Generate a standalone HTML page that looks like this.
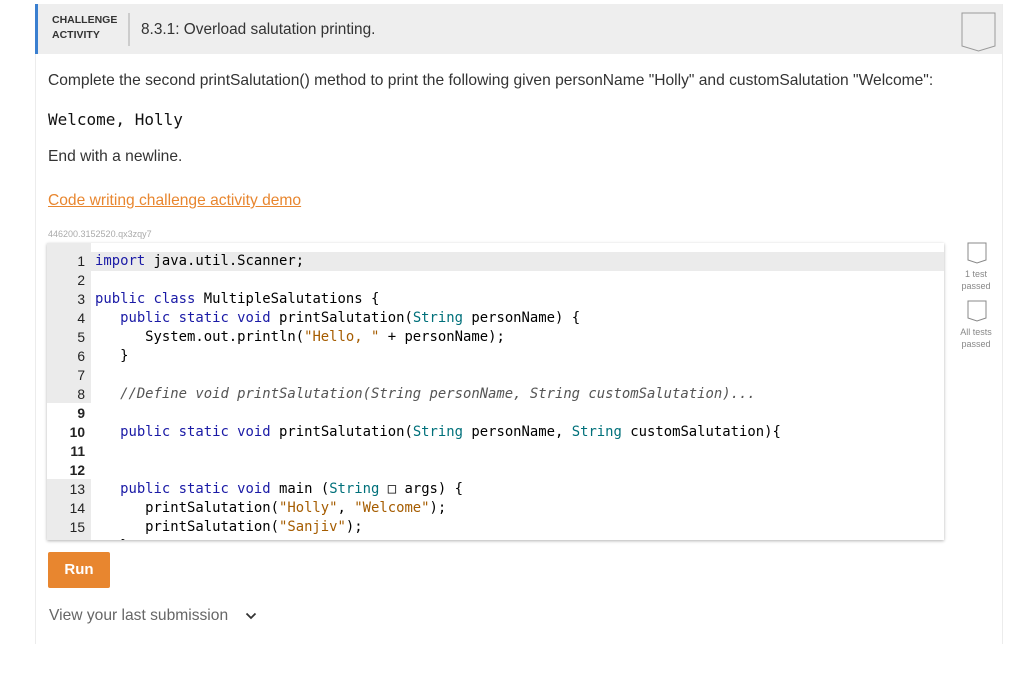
<!DOCTYPE html>
<html><head><meta charset="utf-8"><style>
body{margin:0;width:1024px;height:692px;background:#fff;font-family:"Liberation Sans",sans-serif;position:relative;overflow:hidden}
.card{position:absolute;left:35px;top:4px;width:966px;height:640px;border-right:1px solid #ececec;border-left:1px solid #ececec}
.hdr{position:absolute;left:35px;top:4px;width:967px;height:50px;background:#eeeeee;border-left:3px solid #3a7fd0;box-sizing:border-box}
.ca{position:absolute;left:14px;top:9px;font-size:10.5px;font-weight:bold;color:#333;line-height:15px}
.sep{position:absolute;left:90px;top:9px;width:2px;height:33px;background:#ccc}
.title{position:absolute;left:103px;top:17px;font-size:15.4px;color:#333}
.t{position:absolute;color:#333;font-size:15.6px}
.mono{font-family:"DejaVu Sans Mono","Liberation Mono",monospace}
.ed{position:absolute;left:47px;top:243px;width:897px;height:297px;box-shadow:0 1px 3px rgba(0,0,0,.3);overflow:hidden;background:#fff}
.ln{position:absolute;left:0;width:44px;height:19px;text-align:right;font-size:13.8px;line-height:19px;color:#222;box-sizing:border-box;padding-right:6px}
.g{background:#ebebeb}
.cl{position:absolute;left:48px;font-size:13.9px;line-height:19px;white-space:pre;color:#000}
.k{color:#1a1aa6}.s{color:#a55c00}.c{color:#555;font-style:italic}.ty{color:#00707a}
.small{position:absolute;font-size:9px;color:#888;text-align:center;width:50px;line-height:12px}
</style></head><body>
<div class="card"></div>
<div class="hdr"><div class="ca">CHALLENGE<br>ACTIVITY</div><div class="sep"></div><div class="title">8.3.1: Overload salutation printing.</div>
<svg style="position:absolute;left:923px;top:8px" width="36" height="40"><path d="M1 1H34V34L17.5 39L1 34Z" fill="none" stroke="#999" stroke-width="1"/></svg></div>
<div class="t" style="left:48px;top:72px">Complete the second printSalutation() method to print the following given personName "Holly" and customSalutation "Welcome":</div>
<div class="t mono" style="left:48px;top:110px;font-size:16px;color:#111">Welcome, Holly</div>
<div class="t" style="left:48px;top:148px">End with a newline.</div>
<div class="t" style="left:48px;top:192px;color:#e8862f;text-decoration:underline">Code writing challenge activity demo</div>
<div style="position:absolute;left:48px;top:229px;font-size:9px;color:#aaa">446200.3152520.qx3zqy7</div>
<div class="ed">
<div style="position:absolute;left:0;top:9px;width:897px;height:19px;background:#ebebeb"></div>
<div class="g" style="position:absolute;left:0;top:0;width:44px;height:160px"></div>
<div class="g" style="position:absolute;left:0;top:236px;width:44px;height:70px"></div>
<div class="ln" style="top:9px">1</div><div class="ln" style="top:28px">2</div><div class="ln" style="top:47px">3</div><div class="ln" style="top:66px">4</div><div class="ln" style="top:85px">5</div><div class="ln" style="top:104px">6</div><div class="ln" style="top:123px">7</div><div class="ln" style="top:142px">8</div>
<div class="ln" style="top:161px;font-weight:bold">9</div><div class="ln" style="top:180px;font-weight:bold">10</div><div class="ln" style="top:199px;font-weight:bold">11</div><div class="ln" style="top:218px;font-weight:bold">12</div>
<div class="ln" style="top:237px">13</div><div class="ln" style="top:256px">14</div><div class="ln" style="top:275px">15</div><div class="ln" style="top:294px">16</div>
<div class="cl mono" style="top:9px"><span class="k">import</span> java.util.Scanner;</div>
<div class="cl mono" style="top:47px"><span class="k">public class</span> MultipleSalutations {</div>
<div class="cl mono" style="top:66px">   <span class="k">public static void</span> printSalutation(<span class="ty">String</span> personName) {</div>
<div class="cl mono" style="top:85px">      System.out.println(<span class="s">"Hello, "</span> + personName);</div>
<div class="cl mono" style="top:104px">   }</div>
<div class="cl mono c" style="top:142px">   //Define void printSalutation(String personName, String customSalutation)...</div>
<div class="cl mono" style="top:180px">   <span class="k">public static void</span> printSalutation(<span class="ty">String</span> personName, <span class="ty">String</span> customSalutation){</div>
<div class="cl mono" style="top:237px">   <span class="k">public static void</span> main (<span class="ty">String</span> &#9633; args) {</div>
<div class="cl mono" style="top:256px">      printSalutation(<span class="s">"Holly"</span>, <span class="s">"Welcome"</span>);</div>
<div class="cl mono" style="top:275px">      printSalutation(<span class="s">"Sanjiv"</span>);</div>
<div class="cl mono" style="top:294px">   }</div>
</div>
<div style="position:absolute;left:48px;top:552px;width:62px;height:36px;background:#e8862f;border-radius:2px;color:#fff;font-weight:bold;font-size:15px;text-align:center;line-height:36px">Run</div>
<div class="t" style="left:49px;top:607px;color:#666">View your last submission</div>
<svg style="position:absolute;left:245px;top:611px" width="12" height="10"><path d="M1.5 2.5L6 7L10.5 2.5" fill="none" stroke="#333" stroke-width="1.8"/></svg>
<svg style="position:absolute;left:967px;top:242px" width="20" height="22"><path d="M1 1H19V18L10 21L1 18Z" fill="none" stroke="#888"/></svg>
<div class="small" style="left:951px;top:268px">1 test<br>passed</div>
<svg style="position:absolute;left:967px;top:300px" width="20" height="22"><path d="M1 1H19V18L10 21L1 18Z" fill="none" stroke="#888"/></svg>
<div class="small" style="left:951px;top:326px">All tests<br>passed</div>
</body></html>
